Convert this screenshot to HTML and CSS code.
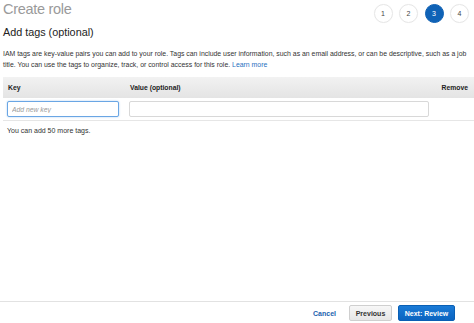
FILE: index.html
```html
<!DOCTYPE html>
<html lang="en">

<head>
    <meta charset="UTF-8">
    <meta name="viewport" content="width=device-width, initial-scale=1.0">
    <title>Create role</title>
    <link rel="stylesheet" href="styles.css">
</head>

<body>

    <div class="wizard">
        <div class="content">
            <div class="top">
                <h1 class="title">Create role</h1>
                <div class="steps">
                    <span class="step">1</span>
                    <span class="step">2</span>
                    <span class="step active">3</span>
                    <span class="step">4</span>
                </div>
            </div>

            <h2 class="subtitle">Add tags (optional)</h2>
            <p class="intro">IAM tags are key-value pairs you can add to your role. Tags can include user information, such as an email address, or can be descriptive, such as a job title. You can use the tags to organize, track, or control access for this role. <a href="#">Learn more</a></p>

            <div class="tags">
                <div class="tags-head">
                    <span>Key</span>
                    <span>Value (optional)</span>
                    <span class="remove">Remove</span>
                </div>
                <div class="tags-row">
                    <input class="field focus" type="text" placeholder="Add new key">
                    <input class="field" type="text">
                    <span></span>
                </div>
            </div>

            <p class="note">You can add 50 more tags.</p>
        </div>

        <div class="footer">
            <a href="#" class="cancel">Cancel</a>
            <button class="btn prev">Previous</button>
            <button class="btn primary">Next: Review</button>
        </div>
    </div>

</body>

</html>
```

FILE: styles.css
```css
body {
    margin: 0;
    font-family: "Liberation Sans", Arial, sans-serif;
    background: #fff;
    color: #222;
}

.wizard {
    display: flex;
    flex-direction: column;
    min-height: 100vh;
}

.content {
    padding-left: 3px;
}

.top {
    display: flex;
    justify-content: space-between;
    align-items: flex-start;
    height: 24px;
}

.title {
    margin: 0;
    padding-top: 1px;
    font-size: 14.5px;
    line-height: 16px;
    letter-spacing: -0.3px;
    font-weight: normal;
    color: #9a9a9a;
}

.steps {
    display: flex;
    gap: 6.5px;
    padding: 4px 5px 0 0;
}

.step {
    display: flex;
    align-items: center;
    justify-content: center;
    width: 19px;
    height: 19px;
    border-radius: 50%;
    border: 1px solid #e6e6e6;
    box-sizing: border-box;
    box-shadow: 0 0 1px rgba(0, 0, 0, 0.06);
    font-size: 7px;
    color: #444;
}

.step.active {
    background: #0f62b6;
    border-color: #0f62b6;
    color: #fff;
}

.subtitle {
    margin: 2px 0 0;
    font-size: 10.8px;
    line-height: 13px;
    font-weight: normal;
    color: #222;
}

.intro {
    margin: 9px 0 0;
    padding-right: 6px;
    font-size: 6.9px;
    line-height: 11px;
    color: #333;
}

.intro a {
    color: #1f6fc0;
    text-decoration: none;
}

.tags {
    margin-top: 7px;
}

.tags-head,
.tags-row {
    display: grid;
    grid-template-columns: 122px 300px 1fr;
    align-items: center;
}

.tags-head {
    height: 21px;
    padding: 0 6px 0 5px;
    background: linear-gradient(#f2f2f2, #e4e4e4);
    font-size: 6.8px;
    font-weight: bold;
    color: #222;
}

.remove {
    text-align: right;
}

.tags-row {
    padding: 3px 6px 3px 4px;
    border-bottom: 1px solid #e6e6e6;
}

.field {
    height: 16px;
    box-sizing: border-box;
    border: 1px solid #d8d8d8;
    border-radius: 2px;
    padding: 0 4px;
    font-family: inherit;
    font-size: 6.8px;
    outline: none;
}

.tags-row .focus {
    width: 112px;
    border-color: #6aa6e4;
    box-shadow: 0 0 2px rgba(60, 140, 220, 0.45);
}

.field::placeholder {
    color: #9a9a9a;
    font-style: italic;
}

.note {
    margin: 6px 0 0;
    padding-left: 4px;
    font-size: 7px;
    line-height: 8px;
    color: #333;
}

.footer {
    margin-top: auto;
    display: flex;
    justify-content: flex-end;
    align-items: center;
    gap: 6px;
    height: 16px;
    padding: 3px 19px 2px 0;
    border-top: 1px solid #e2e2e2;
}

.cancel {
    margin-right: 7px;
    font-size: 7px;
    font-weight: bold;
    color: #1b5fae;
    text-decoration: none;
}

.btn {
    height: 16px;
    padding: 0;
    border: 1px solid #cfcfcf;
    border-radius: 2px;
    background: linear-gradient(#f7f7f7, #e6e6e6);
    font-family: inherit;
    font-size: 7px;
    font-weight: bold;
    color: #333;
}

.btn.prev {
    width: 43px;
}

.btn.primary {
    width: 57px;
    border-color: #0a5fb4;
    background: linear-gradient(#1a7ad6, #0b64c0);
    color: #fff;
}
```
